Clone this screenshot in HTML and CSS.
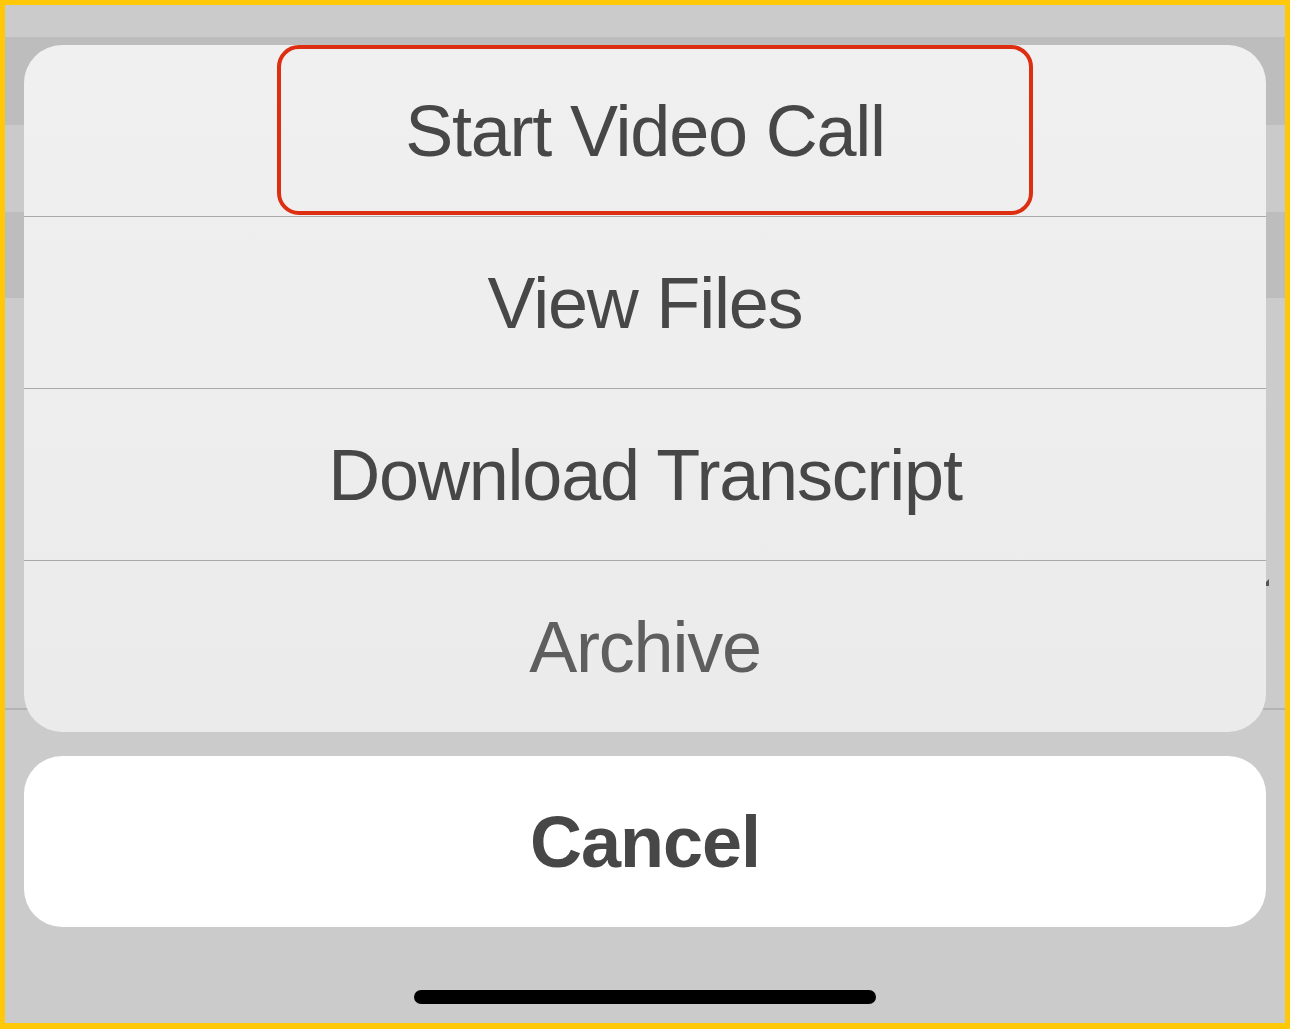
FILE: index.html
```html
<!DOCTYPE html>
<html lang="en">

<head>
    <meta charset="UTF-8">
    <meta name="viewport" content="width=device-width, initial-scale=1.0">
    <title>Action sheet</title>
    <link rel="stylesheet" href="styles.css">
</head>

<body>
    <div class="screen">
        <span class="peek-arrow"></span>

        <div class="action-sheet">
            <div class="action-item">Start Video Call</div>
            <div class="action-item">View Files</div>
            <div class="action-item">Download Transcript</div>
            <div class="action-item muted">Archive</div>
            <div class="highlight-box"></div>
        </div>

        <div class="cancel-btn">Cancel</div>

        <div class="home-bar"></div>
    </div>
</body>

</html>
```

FILE: styles.css
```css
* {
    margin: 0;
    padding: 0;
    box-sizing: border-box;
}

body {
    font-family: 'Liberation Sans', Arial, sans-serif;
    background: #ffc90a;
}

.screen {
    width: 1290px;
    height: 1029px;
    border: 5px solid #ffc90a;
    border-bottom-width: 6px;
    position: relative;
    display: flex;
    flex-direction: column;
    align-items: center;
    background: linear-gradient(to bottom,
            #cbcbcb 0px, #cbcbcb 32px,
            #bdbdbd 32px, #bdbdbd 120px,
            #cacaca 120px, #cacaca 207px,
            #bdbdbd 207px, #bdbdbd 293px,
            #cbcbcb 293px, #cbcbcb 703px,
            #b3b3b3 703px, #b3b3b3 705px,
            #cbcbcb 705px);
}

.peek-arrow {
    position: absolute;
    left: 1257px;
    top: 574px;
    width: 0;
    height: 0;
    border-left: 7px solid transparent;
    border-bottom: 7px solid #555;
}

.action-sheet {
    position: relative;
    width: 1242px;
    margin-top: 40px;
    background: linear-gradient(to bottom, #f0f0f0, #ebebeb);
    border-radius: 38px;
    overflow: hidden;
}

.action-item {
    height: 171px;
    display: flex;
    justify-content: center;
    align-items: center;
    font-size: 72px;
    letter-spacing: -1.2px;
    color: #474747;
}

.action-item + .action-item {
    height: 172px;
    border-top: 1px solid #a9a9a9;
}

.action-item.muted {
    color: #5e5e5e;
}

.highlight-box {
    position: absolute;
    left: 253px;
    top: 0;
    width: 756px;
    height: 170px;
    border: 4px solid #de2e12;
    border-radius: 22px;
}

.cancel-btn {
    width: 1242px;
    height: 171px;
    margin-top: 24px;
    background: #fff;
    border-radius: 38px;
    display: flex;
    justify-content: center;
    align-items: center;
    font-size: 72px;
    font-weight: bold;
    letter-spacing: -1px;
    color: #474747;
}

.home-bar {
    width: 462px;
    height: 14px;
    margin-top: 63px;
    background: #000;
    border-radius: 7px;
}
```
